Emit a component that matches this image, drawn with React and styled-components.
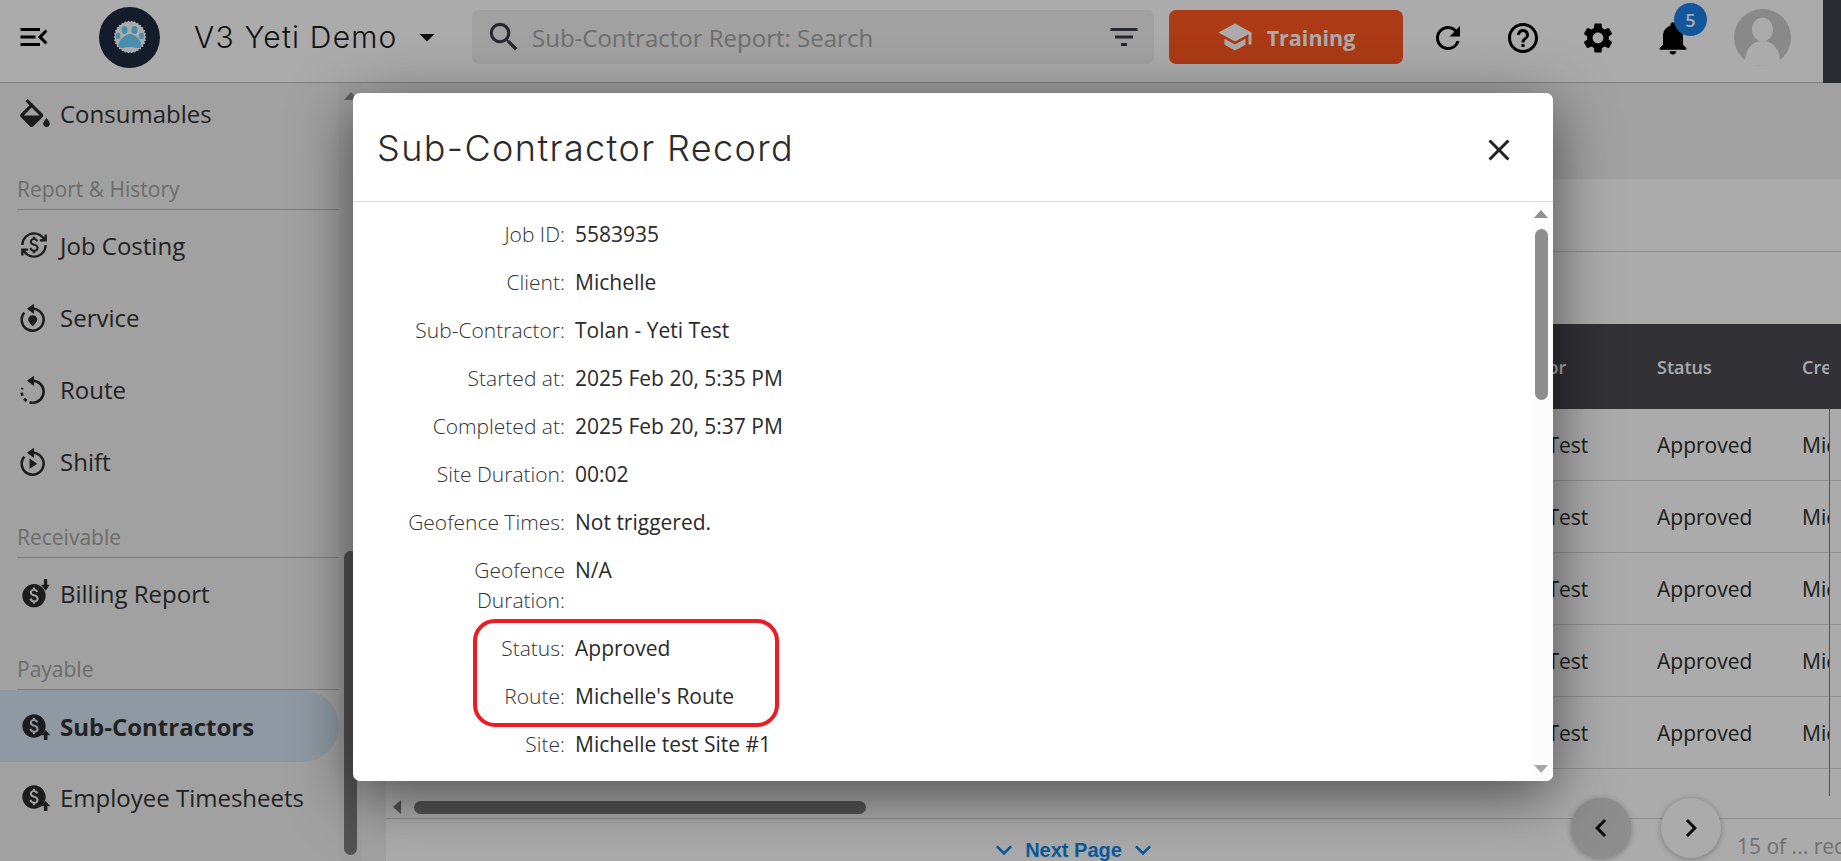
import React from "react";
import styled, { createGlobalStyle } from "styled-components";
import {
  MdMenuOpen,
  MdArrowDropDown,
  MdSearch,
  MdFilterList,
  MdSchool,
  MdRefresh,
  MdHelpOutline,
  MdSettings,
  MdNotifications,
  MdClose,
  MdChevronLeft,
  MdChevronRight,
  MdKeyboardArrowDown,
  MdCurrencyExchange,
} from "react-icons/md";

const GlobalStyle = createGlobalStyle`
  html, body {
    margin: 0;
    height: 100%;
    overflow: hidden;
    font-family: "Open Sans", "Liberation Sans", sans-serif;
    color: #333;
    background: #fff;
  }
  * { box-sizing: border-box; }
`;

const Page = styled.div`
  position: relative;
  display: flex;
  flex-direction: column;
  height: 100vh;
  overflow: hidden;
`;

/* top bar */
const Header = styled.header`
  flex: 0 0 83px;
  display: flex;
  align-items: center;
  padding: 0 0 8px 16px;
  background: #fff;
  border-bottom: 1px solid #bdbdbd;
`;
const MenuButton = styled.div`
  display: flex;
  color: #000;
  font-size: 36px;
`;
const LogoWrap = styled.div`
  display: flex;
  margin-left: 47px;
`;
const CompanyName = styled.div`
  margin-left: 34px;
  width: 215px;
  font-family: Inter, "Open Sans", sans-serif;
  font-size: 30px;
  font-weight: 300;
  letter-spacing: 1.2px;
  color: #1a1a1a;
  white-space: nowrap;
`;
const Caret = styled.div`
  display: flex;
  font-size: 36px;
  color: #1a1a1a;
`;
const SearchBox = styled.div`
  margin-left: 27px;
  width: 682px;
  height: 54px;
  display: flex;
  align-items: center;
  padding: 0 12px 0 13px;
  border-radius: 7px;
  background: #f0f0f0;
  color: #3c3c46;
`;
const SearchText = styled.div`
  flex: 1;
  margin-left: 9px;
  font-size: 24px;
  color: #a6a6a6;
`;
const TrainingButton = styled.div`
  margin-left: 15px;
  width: 234px;
  height: 54px;
  display: flex;
  align-items: center;
  justify-content: center;
  gap: 14px;
  border-radius: 7px;
  background: #ff5720;
  color: #fff;
  font-size: 21.5px;
  font-weight: 700;
`;
const HeaderIcons = styled.div`
  display: flex;
  margin: 2px 0 0 7px;
`;
const IconButton = styled.div`
  position: relative;
  width: 75px;
  height: 40px;
  display: flex;
  align-items: center;
  justify-content: center;
  color: #000;
  font-size: ${({ $size }) => $size || 36}px;
`;
const Badge = styled.span`
  position: absolute;
  top: -15px;
  left: 39px;
  width: 33px;
  height: 33px;
  display: flex;
  align-items: center;
  justify-content: center;
  border-radius: 50%;
  background: #1b82e9;
  color: #fff;
  font-size: 18px;
  font-weight: 600;
`;
const Avatar = styled.div`
  margin-left: 24px;
  display: flex;
`;
const DarkStrip = styled.div`
  margin: 0 0 -9px auto;
  width: 18px;
  align-self: stretch;
  background: #3f3f4c;
`;

/* sidebar + content */
const Body = styled.div`
  flex: 1;
  display: flex;
  min-height: 0;
`;
const Sidebar = styled.nav`
  flex: 0 0 339px;
  overflow: hidden;
  background: #f1f1f1;
`;
const SideList = styled.div`
  margin-top: -5px;
`;
const SideItem = styled.div`
  height: 72px;
  display: flex;
  align-items: center;
  gap: 12px;
  padding: 0 0 ${({ $active }) => ($active ? 0 : 2)}px 20px;
  font-size: 24px;
  font-weight: ${({ $active }) => ($active ? 700 : 400)};
  color: #333;
  background: ${({ $active }) => ($active ? "#d4e4f3" : "transparent")};
  border-radius: ${({ $active }) => ($active ? "0 36px 36px 0" : "0")};
  white-space: nowrap;
  svg {
    overflow: visible;
    flex: none;
  }
`;
const SideIcon = styled.span`
  flex: 0 0 28px;
  min-width: 0;
  display: flex;
  color: #2a2a2a;
  font-size: 28px;
`;
const SideLabel = styled.div`
  height: 60px;
  margin-left: 17px;
  padding-top: 22px;
  border-bottom: 1px solid #bcbcbc;
  font-size: 21px;
  line-height: 34px;
  color: #a2a2a2;
`;
const SideScroll = styled.div`
  flex: 0 0 23px;
  display: flex;
  flex-direction: column;
  align-items: flex-start;
  padding: 9px 0 0 5px;
  background: #ececec;
`;
const ArrowUp = styled.span`
  width: 0;
  height: 0;
  border-left: 7px solid transparent;
  border-right: 7px solid transparent;
  border-bottom: 8px solid #8f8f8f;
`;
const ArrowDown = styled(ArrowUp)`
  border-bottom: 0;
  border-top: 8px solid #a8a8a8;
`;
const SideThumb = styled.div`
  margin-top: 451px;
  width: 13px;
  height: 304px;
  border-radius: 7px;
  background: #7c7c7c;
`;
const Gutter = styled.div`
  flex: 0 0 24px;
  background: #f0f0f0;
`;
const Main = styled.main`
  flex: 1;
  min-width: 0;
  display: flex;
  flex-direction: column;
  background: #fff;
`;
const TopBand = styled.div`
  flex: 0 0 96px;
  background: #f0f0f0;
`;
const Toolbar = styled.div`
  flex: 0 0 73px;
  border-bottom: 1px solid #d9d9d9;
`;
const SubBar = styled.div`
  flex: 0 0 72px;
`;
const TableHead = styled.div`
  flex: 0 0 85px;
  display: grid;
  grid-template-columns: 1048px 223px 145px 39px;
  align-items: center;
  background: #494a51;
  color: #fff;
  font-size: 18px;
  font-weight: 600;
`;
const HeadCell = styled.div`
  white-space: nowrap;
  overflow: hidden;
  width: ${({ $width }) => ($width ? `${$width}px` : "auto")};
`;
const TableBody = styled.div`
  flex: 1;
  min-height: 0;
  overflow: hidden;
`;
const Row = styled.div`
  height: 72px;
  display: grid;
  grid-template-columns: 1048px 223px 145px 27px 12px;
  align-items: center;
  border-bottom: 1px solid #d9d9d9;
  font-size: 21px;
  color: #2b2b2b;
`;
const Cell = styled.div`
  white-space: nowrap;
  overflow: hidden;
`;
const StickyCell = styled.div`
  height: 72px;
  border-left: 1px solid #7f7f7f;
`;
const HScroll = styled.div`
  flex: 0 0 23px;
  display: flex;
  align-items: center;
  gap: 13px;
  padding: 0 0 0 7px;
  border-bottom: 1px solid #d2d2d2;
`;
const ArrowLeft = styled.span`
  width: 0;
  height: 0;
  border-top: 7px solid transparent;
  border-bottom: 7px solid transparent;
  border-right: 8px solid #7a7a7a;
`;
const HThumb = styled.div`
  width: 452px;
  height: 13px;
  border-radius: 7px;
  background: #7c7c7c;
`;
const Footer = styled.div`
  position: relative;
  flex: 0 0 42px;
  min-height: 0;
  display: flex;
  align-items: flex-start;
  justify-content: center;
  padding: 15px 80px 0 0;
`;
const NextPage = styled.div`
  display: flex;
  align-items: center;
  gap: 5px;
  font-family: "Liberation Sans", Arial, sans-serif;
  font-size: 20px;
  font-weight: 700;
  color: #0f86e7;
`;
const Pager = styled.div`
  position: absolute;
  left: 1185px;
  top: -21px;
  display: flex;
  gap: 30px;
  white-space: nowrap;
`;
const RoundButton = styled.div`
  width: 60px;
  height: 60px;
  display: flex;
  align-items: center;
  justify-content: center;
  border-radius: 50%;
  font-size: 36px;
  color: #111;
  background: ${({ $off }) => ($off ? "#d2d2d2" : "#fff")};
  box-shadow: 0 1px 6px rgba(0, 0, 0, 0.3);
`;
const PagerText = styled.div`
  margin: 34px 0 0 -14px;
  font-size: 21px;
  color: #a8a8a8;
`;

/* dialog */
const Overlay = styled.div`
  position: absolute;
  inset: 0;
  padding: 93px 0 0 353px;
  background: rgba(0, 0, 0, 0.33);
`;
const Dialog = styled.section`
  width: 1200px;
  height: 688px;
  display: flex;
  flex-direction: column;
  overflow: hidden;
  border-radius: 7px;
  background: #fff;
  box-shadow: 0 14px 60px rgba(0, 0, 0, 0.55);
`;
const DialogHeader = styled.div`
  flex: 0 0 109px;
  display: flex;
  align-items: center;
  justify-content: space-between;
  padding: 1px 36px 0 24px;
  border-bottom: 1px solid #dcdcdc;
`;
const DialogTitle = styled.h2`
  margin: 0;
  font-family: Inter, "Open Sans", sans-serif;
  font-size: 36px;
  font-weight: 300;
  letter-spacing: 1.4px;
  color: #2b2b2b;
`;
const CloseButton = styled.div`
  display: flex;
  margin-top: 4px;
  font-size: 36px;
  color: #222;
`;
const DialogBody = styled.div`
  flex: 1;
  min-height: 0;
  display: flex;
`;
const Fields = styled.div`
  flex: 1;
  padding: 8px 0 0 52px;
  overflow: hidden;
`;
const FieldRow = styled.div`
  display: grid;
  grid-template-columns: 160px 1fr;
  column-gap: 10px;
  padding: 9px 0;
  font-size: 21px;
  line-height: 30px;
`;
const FieldLabel = styled.div`
  text-align: right;
  font-weight: 300;
  color: #333;
`;
const FieldValue = styled.div`
  font-weight: 400;
  color: #2a2a2a;
`;
const Highlight = styled.div`
  position: relative;
  &::after {
    content: "";
    box-sizing: border-box;
    position: absolute;
    left: 68px;
    top: -5px;
    width: 306px;
    height: 108px;
    border: 4px solid #ed1c24;
    border-radius: 22px;
  }
`;
const DialogScroll = styled.div`
  flex: 0 0 20px;
  display: flex;
  flex-direction: column;
  align-items: flex-start;
  padding: 8px 0 8px 1px;
  background: #fcfcfc;
`;
const DialogThumb = styled.div`
  margin: 11px 0 0 1px;
  width: 13px;
  height: 171px;
  border-radius: 7px;
  background: #8e8e8e;
`;
const Spacer = styled.div`
  flex: 1;
`;

const furPoints = Array.from({ length: 60 }, (_, i) => {
  const a = (i / 60) * Math.PI * 2;
  const r = i % 2 ? 15 : 16.5;
  return `${(31 + Math.cos(a) * r).toFixed(1)},${(30 + Math.sin(a) * r).toFixed(1)}`;
}).join(" ");

const Logo = () => (
  <svg width="61" height="61" viewBox="0 0 61 61">
    <circle cx="30.5" cy="30.5" r="30.5" fill="#1e2b40" />
    <polygon points={furPoints} fill="#fff" />
    <g fill="#6ed2ff">
      <ellipse cx="25.5" cy="23" rx="3" ry="4" />
      <ellipse cx="35.5" cy="23" rx="3" ry="4" />
      <ellipse cx="19" cy="29" rx="2.4" ry="3.2" />
      <ellipse cx="42.5" cy="29" rx="2.4" ry="3.2" />
      <path d="M31 27c4.500 0 11.500 6.500 11.500 11 0 3.400-3.500 3.400-5.500 2.700-3.500-1.100-8.500-1.100-12 0-2 .7-5.500.7-5.500-2.700 0-4.500 7-11 11.500-11z" />
    </g>
  </svg>
);

const UserAvatar = () => (
  <svg width="57" height="57" viewBox="0 0 57 57">
    <circle cx="28.500" cy="28.500" r="28.500" fill="#cdcdcd" />
    <ellipse cx="28.500" cy="20.500" rx="10.500" ry="12" fill="#fff" />
    <path d="M11 53c0-13 7-21 17.500-21S46 40 46 53c-5 2.600-11 4-17.500 4S16 55.600 11 53z" fill="#fff" />
  </svg>
);

const BucketIcon = () => (
  <svg width="30" height="28" viewBox="3 0 18 17" fill="currentColor">
    <path d="M16.56 8.94L7.62 0 6.21 1.41l2.38 2.38-5.15 5.15c-.59.59-.59 1.54 0 2.12l5.5 5.5c.29.29.68.44 1.06.44s.77-.15 1.06-.44l5.500-5.500c.59-.58.59-1.53 0-2.12zM5.21 10L10 5.21 14.790 10H5.210zM19 11.500s-2 2.170-2 3.500c0 1.100.9 2 2 2s2-.9 2-2c0-1.330-2-3.500-2-3.500z" />
  </svg>
);

// circle arrow used by Service / Route / Shift
const CycleIcon = ({ dashed, children }) => (
  <svg width="28" height="29" viewBox="2.500 1 21 22.500" fill="none" stroke="currentColor" strokeWidth="2">
    {dashed ? (
      <>
        <path d="M12 5.500a8.500 8.500 0 0 1 0 17" />
        <path d="M12 22.500a8.500 8.500 0 0 1-8-11.500" strokeDasharray="2.600 2.400" />
      </>
    ) : (
      <path d="M12 5.500a8.500 8.500 0 1 1-6.500 3" />
    )}
    <path d="M13 1.500v8L7.500 5.500z" fill="currentColor" stroke="none" />
    {children}
  </svg>
);

const paidPath =
  "M12 2C6.480 2 2 6.480 2 12s4.480 10 10 10 10-4.480 10-10S17.520 2 12 2zm.88 15.760V19h-1.750v-1.290c-.74-.18-2.390-.77-3.020-2.960l1.650-.67c.06.22.58 2.090 2.400 2.090.93 0 1.980-.48 1.980-1.610 0-.96-.7-1.460-2.280-2.030-1.100-.39-3.350-1.030-3.350-3.310 0-.1.01-2.400 2.620-2.960V5h1.750v1.240c1.840.32 2.510 1.790 2.660 2.230l-1.580.67c-.11-.35-.59-1.340-1.900-1.340-.7 0-1.810.37-1.810 1.390 0 .95.86 1.310 2.640 1.900 2.400.83 3.010 2.050 3.010 3.450 0 2.630-2.500 3.130-3.020 3.220z";

const DollarDown = () => (
  <svg width="1em" height="1em" viewBox="0 0 24 24" fill="currentColor">
    <path d={paidPath} transform="translate(0 2.300)" />
    <path d="M20.500 0h2.800v5h2.200L22 10l-4-5h2.500z" />
  </svg>
);

const DollarUp = () => (
  <svg width="1em" height="1em" viewBox="0 0 24 24" fill="currentColor">
    <path d={paidPath} />
    <path d="M20.500 24v-4h-2.500l4-4.500 4 4.500h-2.500v4z" />
  </svg>
);

const fields = [
  ["Job ID:", "5583935"],
  ["Client:", "Michelle"],
  ["Sub-Contractor:", "Tolan - Yeti Test"],
  ["Started at:", "2025 Feb 20, 5:35 PM"],
  ["Completed at:", "2025 Feb 20, 5:37 PM"],
  ["Site Duration:", "00:02"],
  ["Geofence Times:", "Not triggered."],
  ["Geofence Duration:", "N/A"],
];

const Field = ({ label, value }) => (
  <FieldRow>
    <FieldLabel>{label}</FieldLabel>
    <FieldValue>{value}</FieldValue>
  </FieldRow>
);

const App = () => {
  return (
    <Page>
      <GlobalStyle />
      <Header>
        <MenuButton>
          <MdMenuOpen />
        </MenuButton>
        <LogoWrap>
          <Logo />
        </LogoWrap>
        <CompanyName>V3 Yeti Demo</CompanyName>
        <Caret>
          <MdArrowDropDown />
        </Caret>
        <SearchBox>
          <MdSearch size={38} />
          <SearchText>Sub-Contractor Report: Search</SearchText>
          <MdFilterList size={36} />
        </SearchBox>
        <TrainingButton>
          <MdSchool size={36} />
          Training
        </TrainingButton>
        <HeaderIcons>
          <IconButton>
            <MdRefresh />
          </IconButton>
          <IconButton>
            <MdHelpOutline />
          </IconButton>
          <IconButton>
            <MdSettings />
          </IconButton>
          <IconButton $size={40}>
            <MdNotifications />
            <Badge>5</Badge>
          </IconButton>
        </HeaderIcons>
        <Avatar>
          <UserAvatar />
        </Avatar>
        <DarkStrip />
      </Header>

      <Body>
        <Sidebar>
          <SideList>
            <SideItem>
              <SideIcon>
                <BucketIcon />
              </SideIcon>
              Consumables
            </SideItem>
            <SideLabel>Report &amp; History</SideLabel>
            <SideItem>
              <SideIcon>
                <MdCurrencyExchange />
              </SideIcon>
              Job Costing
            </SideItem>
            <SideItem>
              <SideIcon>
                <CycleIcon>
                  <path
                    d="M12 10.500c-2 0-3.500 1.500-3.500 3.300 0 2.200 3.500 5.200 3.500 5.200s3.500-3 3.500-5.200c0-1.800-1.500-3.300-3.500-3.300z"
                    fill="currentColor"
                    stroke="none"
                  />
                </CycleIcon>
              </SideIcon>
              Service
            </SideItem>
            <SideItem>
              <SideIcon>
                <CycleIcon dashed />
              </SideIcon>
              Route
            </SideItem>
            <SideItem>
              <SideIcon>
                <CycleIcon>
                  <path d="M9.500 10l6 4-6 4z" fill="currentColor" stroke="none" />
                </CycleIcon>
              </SideIcon>
              Shift
            </SideItem>
            <SideLabel>Receivable</SideLabel>
            <SideItem>
              <SideIcon>
                <DollarDown />
              </SideIcon>
              Billing Report
            </SideItem>
            <SideLabel>Payable</SideLabel>
            <SideItem $active>
              <SideIcon>
                <DollarUp />
              </SideIcon>
              Sub-Contractors
            </SideItem>
            <SideItem>
              <SideIcon>
                <DollarUp />
              </SideIcon>
              Employee Timesheets
            </SideItem>
          </SideList>
        </Sidebar>
        <SideScroll>
          <ArrowUp />
          <SideThumb />
        </SideScroll>
        <Gutter />

        <Main>
          <TopBand />
          <Toolbar />
          <SubBar />
          <TableHead>
            <HeadCell>Job ID</HeadCell>
            <HeadCell>Sub-Contractor</HeadCell>
            <HeadCell>Status</HeadCell>
            <HeadCell $width={27}>Created By</HeadCell>
          </TableHead>
          <TableBody>
            {[0, 1, 2, 3, 4, 5].map((i) => (
              <Row key={i}>
                <Cell>{i < 5 ? "5583935" : ""}</Cell>
                <Cell>{i < 5 ? "Tolan - Yeti Test" : ""}</Cell>
                <Cell>{i < 5 ? "Approved" : ""}</Cell>
                <Cell>{i < 5 ? "Michelle" : ""}</Cell>
                <StickyCell />
              </Row>
            ))}
          </TableBody>
          <HScroll>
            <ArrowLeft />
            <HThumb />
          </HScroll>
          <Footer>
            <NextPage>
              <MdKeyboardArrowDown size={32} />
              Next Page
              <MdKeyboardArrowDown size={32} />
            </NextPage>
            <Pager>
              <RoundButton $off>
                <MdChevronLeft />
              </RoundButton>
              <RoundButton>
                <MdChevronRight />
              </RoundButton>
              <PagerText>15 of ... records</PagerText>
            </Pager>
          </Footer>
        </Main>
      </Body>

      <Overlay>
        <Dialog>
          <DialogHeader>
            <DialogTitle>Sub-Contractor Record</DialogTitle>
            <CloseButton>
              <MdClose />
            </CloseButton>
          </DialogHeader>
          <DialogBody>
            <Fields>
              {fields.map(([label, value]) => (
                <Field key={label} label={label} value={value} />
              ))}
              <Highlight>
                <Field label="Status:" value="Approved" />
                <Field label="Route:" value="Michelle's Route" />
              </Highlight>
              <Field label="Site:" value="Michelle test Site #1" />
            </Fields>
            <DialogScroll>
              <ArrowUp />
              <DialogThumb />
              <Spacer />
              <ArrowDown />
            </DialogScroll>
          </DialogBody>
        </Dialog>
      </Overlay>
    </Page>
  );
};

export default App;
